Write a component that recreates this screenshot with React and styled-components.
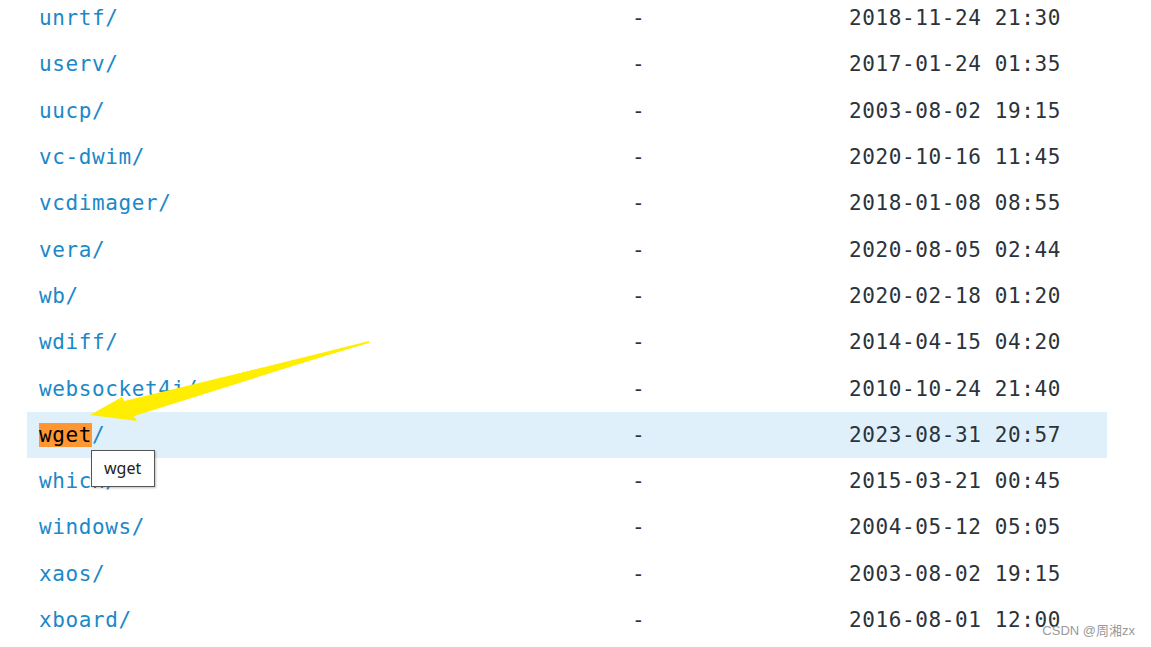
import React from "react";
import styled, { createGlobalStyle } from "styled-components";

const GlobalStyle = createGlobalStyle`
  html, body {
    margin: 0;
    padding: 0;
    background: #fff;
    overflow: hidden;
  }
`;

const Page = styled.div`
  position: relative;
  width: 1151px;
  height: 647px;
  overflow: hidden;
  background: #fff;
`;

const Listing = styled.div`
  margin: -5px 0 0 27px;
  width: 1080px;
  display: flex;
  flex-direction: column;
`;

const Row = styled.div`
  display: grid;
  grid-template-columns: 593px 217px 1fr;
  align-items: center;
  height: 46.3px;
  padding-left: 12px;
  background: ${({ $active }) => ($active ? "#dff0fa" : "transparent")};
  font-family: "DejaVu Sans Mono", "Liberation Mono", monospace;
  font-size: 21px;
  letter-spacing: 0.6px;
  color: #2b333b;
`;

const NameLink = styled.a`
  position: relative;
  color: #1b88c9;
  text-decoration: none;
`;

const Found = styled.mark`
  background: #ff9632;
  color: #000;
`;

const Tooltip = styled.span`
  position: absolute;
  left: 52px;
  top: 27px;
  padding: 7px 13px 8px 12px;
  background: #fff;
  border: 1px solid #555;
  box-shadow: 1px 1px 2px rgba(0, 0, 0, 0.25);
  font-family: "Noto Sans", "Liberation Sans", sans-serif;
  font-size: 16px;
  line-height: 20px;
  letter-spacing: 0;
  color: #222;
  z-index: 2;
`;

const Arrow = styled.svg`
  position: absolute;
  left: 0;
  top: 0;
  pointer-events: none;
  z-index: 3;
`;

const Watermark = styled.div`
  position: absolute;
  right: 16px;
  bottom: 8px;
  font-family: "Liberation Sans", "Noto Sans CJK SC", sans-serif;
  font-size: 13px;
  color: #9a9a9a;
`;

const entries = [
  ["unrtf/", "2018-11-24 21:30"],
  ["userv/", "2017-01-24 01:35"],
  ["uucp/", "2003-08-02 19:15"],
  ["vc-dwim/", "2020-10-16 11:45"],
  ["vcdimager/", "2018-01-08 08:55"],
  ["vera/", "2020-08-05 02:44"],
  ["wb/", "2020-02-18 01:20"],
  ["wdiff/", "2014-04-15 04:20"],
  ["websocket4j/", "2010-10-24 21:40"],
  ["wget/", "2023-08-31 20:57"],
  ["which/", "2015-03-21 00:45"],
  ["windows/", "2004-05-12 05:05"],
  ["xaos/", "2003-08-02 19:15"],
  ["xboard/", "2016-08-01 12:00"],
];

export default function App() {
  return (
    <Page>
      <GlobalStyle />
      <Listing>
        {entries.map(([name, date]) => {
          const active = name === "wget/";
          return (
            <Row key={name} $active={active}>
              <span>
                <NameLink href="#">
                  {active ? (
                    <>
                      <Found>wget</Found>/<Tooltip>wget</Tooltip>
                    </>
                  ) : (
                    name
                  )}
                </NameLink>
              </span>
              <span>-</span>
              <span>{date}</span>
            </Row>
          );
        })}
      </Listing>
      <Arrow width="1151" height="647" viewBox="0 0 1151 647">
        <polygon points="369,341 121,403 126,414 369,343" fill="#ffee00" />
        <polygon points="90,415 122,397 137,421" fill="#ffee00" />
        <polygon points="120,402 128,418 369,342" fill="#ffee00" />
      </Arrow>
      <Watermark>CSDN @周湘zx</Watermark>
    </Page>
  );
}
